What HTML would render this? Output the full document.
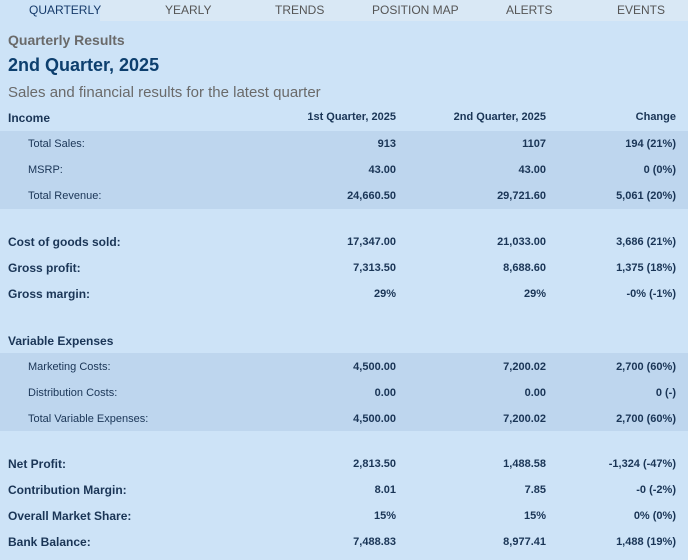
<html><head><style>
body{margin:0;width:688px;height:560px;background:#cde3f7;font-family:"Liberation Sans",sans-serif;color:#1a3556;overflow:hidden;position:relative}
.tabs{position:absolute;top:0;left:0;width:688px;height:21px;background:#d9e8f5}
.tab{position:absolute;top:3px;font-size:12px;color:#555;letter-spacing:0}
.t{position:absolute;white-space:nowrap}
.r{position:absolute;white-space:nowrap;text-align:right;font-size:11px;font-weight:bold}
.band{position:absolute;left:0;width:688px;background:#bed6ee}
</style></head><body>
<div class="tabs"></div>
<div style="position:absolute;left:0;top:0;width:100px;height:21px;background:#cde3f7"></div>
<div class="tab" style="left:29px;color:#153a6a">QUARTERLY</div>
<div class="tab" style="left:165px">YEARLY</div>
<div class="tab" style="left:275px">TRENDS</div>
<div class="tab" style="left:372px">POSITION MAP</div>
<div class="tab" style="left:506px">ALERTS</div>
<div class="tab" style="left:617px">EVENTS</div>
<div class="t" style="left:8px;top:32px;font-size:14px;font-weight:bold;color:#6a6a6a">Quarterly Results</div>
<div class="t" style="left:8px;top:55px;font-size:18px;font-weight:bold;color:#0d3f6e">2nd Quarter, 2025</div>
<div class="t" style="left:8px;top:84px;font-size:15px;color:#6a6a6a">Sales and financial results for the latest quarter</div>
<div class="t" style="left:8px;top:111px;font-size:12px;font-weight:bold">Income</div>
<div class="r" style="right:292px;top:111px">1st Quarter, 2025</div>
<div class="r" style="right:142px;top:111px">2nd Quarter, 2025</div>
<div class="r" style="right:12px;top:111px">Change</div>
<div class="band" style="top:131px;height:78px"></div>
<div class="band" style="top:353px;height:78px"></div>
<div id="rows"></div>
<script>
var rows=[
[144,1,"Total Sales:","913","1107","194 (21%)"],
[170,1,"MSRP:","43.00","43.00","0 (0%)"],
[196,1,"Total Revenue:","24,660.50","29,721.60","5,061 (20%)"],
[242,0,"Cost of goods sold:","17,347.00","21,033.00","3,686 (21%)"],
[268,0,"Gross profit:","7,313.50","8,688.60","1,375 (18%)"],
[294,0,"Gross margin:","29%","29%","-0% (-1%)"],
[341,0,"Variable Expenses","","",""],
[367,1,"Marketing Costs:","4,500.00","7,200.02","2,700 (60%)"],
[393,1,"Distribution Costs:","0.00","0.00","0 (-)"],
[419,1,"Total Variable Expenses:","4,500.00","7,200.02","2,700 (60%)"],
[464,0,"Net Profit:","2,813.50","1,488.58","-1,324 (-47%)"],
[490,0,"Contribution Margin:","8.01","7.85","-0 (-2%)"],
[516,0,"Overall Market Share:","15%","15%","0% (0%)"],
[542,0,"Bank Balance:","7,488.83","8,977.41","1,488 (19%)"]];
var h="";rows.forEach(function(r){var y=r[0]-7;
h+='<div class="t" style="left:'+(r[1]?28:8)+'px;top:'+(r[1]?y+1:y)+'px;font-size:'+(r[1]?11:12)+'px;font-weight:'+(r[1]?'normal':'bold')+'">'+r[2]+'</div>';
h+='<div class="r" style="right:292px;top:'+(y+1)+'px">'+r[3]+'</div><div class="r" style="right:142px;top:'+(y+1)+'px">'+r[4]+'</div><div class="r" style="right:12px;top:'+(y+1)+'px">'+r[5]+'</div>';});
document.getElementById("rows").innerHTML=h;
</script>
</body></html>
